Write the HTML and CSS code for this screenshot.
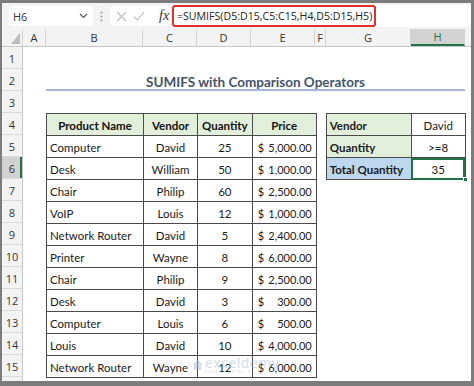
FILE: index.html
```html
<!DOCTYPE html>
<html lang="en">
<head>
    <meta charset="UTF-8">
    <meta name="viewport" content="width=device-width, initial-scale=1.0">
    <title>SUMIFS with Comparison Operators</title>
    <link rel="stylesheet" href="styles.css">
</head>
<body>
    <div class="app">
        <div class="formula-bar">
            <div class="name-box">
                <span>H6</span>
                <svg class="chevron" width="9" height="6" viewBox="0 0 9 6"><polyline points="1,1 4.5,4.5 8,1" fill="none" stroke="#555" stroke-width="1.1"/></svg>
            </div>
            <svg class="grip" width="3" height="11" viewBox="0 0 3 11"><circle cx="1.5" cy="1.5" r="1" fill="#9a9a9a"/><circle cx="1.5" cy="5.5" r="1" fill="#9a9a9a"/><circle cx="1.5" cy="9.5" r="1" fill="#9a9a9a"/></svg>
            <div class="fx-box">
                <svg width="11" height="11" viewBox="0 0 11 11"><path d="M1 1 L10 10 M10 1 L1 10" stroke="#bdbdbd" stroke-width="1.1"/></svg>
                <svg width="12" height="10" viewBox="0 0 12 10"><polyline points="1,5.5 4.3,9 11,1" fill="none" stroke="#bdbdbd" stroke-width="1.1"/></svg>
                <span class="fx">fx</span>
            </div>
            <div class="formula">
                <span class="formula-text">=SUMIFS(D5:D15,C5:C15,H4,D5:D15,H5)</span>
            </div>
        </div>

        <div class="col-headers">
            <div class="corner">
                <svg width="9" height="11" viewBox="0 0 9 11"><polygon points="9,0 9,11 0,11" fill="#bcbcbc"/></svg>
            </div>
            <div class="ch w-a">A</div>
            <div class="ch w-b">B</div>
            <div class="ch w-c">C</div>
            <div class="ch w-d">D</div>
            <div class="ch w-e">E</div>
            <div class="ch w-f">F</div>
            <div class="ch w-g">G</div>
            <div class="ch w-h active">H</div>
            <div class="ch w-i"></div>
        </div>

        <div class="sheet">
            <div class="row-headers">
                <div class="rh">1</div>
                <div class="rh">2</div>
                <div class="rh">3</div>
                <div class="rh">4</div>
                <div class="rh">5</div>
                <div class="rh active">6</div>
                <div class="rh">7</div>
                <div class="rh">8</div>
                <div class="rh">9</div>
                <div class="rh">10</div>
                <div class="rh">11</div>
                <div class="rh">12</div>
                <div class="rh">13</div>
                <div class="rh">14</div>
                <div class="rh">15</div>
                <div class="rh"></div>
            </div>

            <div class="cells">
                <div class="blank-row"></div>
                <div class="title-row">
                    <div class="title">SUMIFS with Comparison Operators</div>
                </div>
                <div class="blank-row"></div>

                <div class="tables">
                    <table class="data">
                        <tr class="head">
                            <th class="w-b">Product Name</th>
                            <th class="w-c">Vendor</th>
                            <th class="w-d">Quantity</th>
                            <th class="w-e">Price</th>
                        </tr>
                        <tr><td class="left">Computer</td><td>David</td><td>25</td><td class="price"><div class="money"><span>$</span><span>5,000.00</span></div></td></tr>
                        <tr><td class="left">Desk</td><td>William</td><td>50</td><td class="price"><div class="money"><span>$</span><span>1,000.00</span></div></td></tr>
                        <tr><td class="left">Chair</td><td>Philip</td><td>60</td><td class="price"><div class="money"><span>$</span><span>2,500.00</span></div></td></tr>
                        <tr><td class="left">VoIP</td><td>Louis</td><td>12</td><td class="price"><div class="money"><span>$</span><span>1,000.00</span></div></td></tr>
                        <tr><td class="left">Network Router</td><td>David</td><td>5</td><td class="price"><div class="money"><span>$</span><span>2,400.00</span></div></td></tr>
                        <tr><td class="left">Printer</td><td>Wayne</td><td>8</td><td class="price"><div class="money"><span>$</span><span>6,000.00</span></div></td></tr>
                        <tr><td class="left">Chair</td><td>Philip</td><td>9</td><td class="price"><div class="money"><span>$</span><span>2,500.00</span></div></td></tr>
                        <tr><td class="left">Desk</td><td>David</td><td>3</td><td class="price"><div class="money"><span>$</span><span>300.00</span></div></td></tr>
                        <tr><td class="left">Computer</td><td>Louis</td><td>6</td><td class="price"><div class="money"><span>$</span><span>500.00</span></div></td></tr>
                        <tr><td class="left">Louis</td><td>David</td><td>10</td><td class="price"><div class="money"><span>$</span><span>4,000.00</span></div></td></tr>
                        <tr><td class="left">Network Router</td><td>Wayne</td><td>12</td><td class="price"><div class="money"><span>$</span><span>6,000.00</span></div></td></tr>
                    </table>

                    <table class="criteria">
                        <tr><th class="w-g label">Vendor</th><td class="w-h">David</td></tr>
                        <tr><th class="label">Quantity</th><td>&gt;=8</td></tr>
                        <tr><th class="label total">Total Quantity</th><td class="selected">35<span class="handle"></span></td></tr>
                    </table>
                </div>
            </div>
        </div>

        <div class="watermark">
            <svg width="11" height="10" viewBox="0 0 12 11"><polygon points="6,0 12,5 10,5 10,11 2,11 2,5 0,5" fill="#a9bbd4"/></svg>
            <div class="wm-text">
                <span class="wm-name">exceldemy</span>
                <span class="wm-sub">EXCEL · DATA · BI</span>
            </div>
        </div>
    </div>
</body>
</html>
```

FILE: styles.css
```css
body {
    margin: 0;
    background-color: #7c7c7c;
    font-family: Lato, "Liberation Sans", sans-serif;
}

.app {
    position: relative;
    margin: 3px 3px 0 2px;
    height: 378px;
    background-color: #fff;
    overflow: hidden;
}

/* formula bar */
.formula-bar {
    display: flex;
    align-items: center;
    height: 26px;
    background-color: #f3f3f3;
}
.name-box {
    display: flex;
    align-items: center;
    justify-content: space-between;
    width: 84px;
    height: 20px;
    margin-left: 7px;
    padding: 0 5px 0 4px;
    box-sizing: border-box;
    background-color: #fff;
    border-radius: 3px;
    font-family: "Open Sans", sans-serif;
    font-size: 11px;
    color: #333;
}
.grip {
    margin: 0 7px 0 7px;
}
.fx-box {
    display: flex;
    align-items: center;
    gap: 6px;
    width: 61px;
    height: 20px;
    padding-left: 6px;
    box-sizing: border-box;
    background-color: #fff;
    border-radius: 3px 0 0 3px;
}
.fx {
    font-family: "Liberation Serif", serif;
    font-style: italic;
    font-size: 14px;
    color: #333;
    margin-left: 8px;
}
.formula {
    flex: 1;
    display: flex;
    align-items: center;
    height: 22px;
    margin-left: 1px;
    background-color: #fff;
}
.formula-text {
    border: 2px solid #e0312f;
    border-radius: 3px;
    padding: 2px 2px 2px 3px;
    font-family: "Open Sans", sans-serif;
    font-size: 10.6px;
    color: #222;
    line-height: 14px;
}

/* column headers */
.col-headers {
    display: flex;
    height: 18px;
    background-color: #f3f3f3;
    border-bottom: 1px solid #c9c9c9;
    box-sizing: border-box;
}
.corner {
    width: 21px;
    display: flex;
    align-items: flex-end;
    justify-content: flex-end;
    padding: 0 2px 2px 0;
    box-sizing: border-box;
    border-right: 1px solid #d4d4d4;
}
.ch {
    flex: none;
    display: flex;
    align-items: center;
    justify-content: center;
    box-sizing: border-box;
    border-right: 1px solid #d4d4d4;
    font-family: "Open Sans", sans-serif;
    font-size: 11px;
    color: #333;
}
.ch.active {
    background-color: #d2d2d2;
    border-bottom: 2px solid #217346;
    color: #217346;
}
.w-a { width: 23px; }
.w-b { width: 97px; }
.w-c { width: 54px; }
.w-d { width: 54px; }
.w-e { width: 64px; }
.w-f { width: 11px; }
.w-g { width: 85px; }
.w-h { width: 54px; }
.w-i { width: 6px; border-right: none; }

/* sheet */
.sheet {
    display: flex;
}
.row-headers {
    width: 21px;
    flex: none;
    background-color: #f3f3f3;
    border-right: 1px solid #c9c9c9;
    box-sizing: border-box;
}
.rh {
    height: 22px;
    box-sizing: border-box;
    border-bottom: 1px solid #dadada;
    display: flex;
    align-items: center;
    justify-content: center;
    padding-top: 2px;
    font-family: "Open Sans", sans-serif;
    font-size: 11px;
    color: #333;
}
.rh.active {
    background-color: #d2d2d2;
    box-shadow: inset -2px 0 0 #217346;
}

.cells {
    flex: 1;
}
.blank-row {
    height: 22px;
}
.title-row {
    height: 22px;
    padding-left: 23px;
}
.title {
    width: 419px;
    height: 22px;
    box-sizing: border-box;
    border-bottom: 2px solid #a2b6de;
    text-align: center;
    font-weight: bold;
    font-size: 13.5px;
    color: #44546a;
    padding-top: 5px;
}

.tables {
    display: flex;
    align-items: flex-start;
    padding-left: 23px;
}
table {
    border-collapse: collapse;
    table-layout: fixed;
    font-size: 11.5px;
    color: #1a1a1a;
}
tr {
    height: 22px;
}
th, td {
    border: 1px solid #4a4a4a;
    padding: 2px 4px 0;
    box-sizing: border-box;
    text-align: center;
    white-space: nowrap;
}
.head th {
    background-color: #e2efda;
    font-weight: bold;
    color: #111;
}
td.left {
    text-align: left;
    padding-left: 3px;
}
td.price {
    padding: 2px 4px 0 5px;
    font-size: 11px;
}
.money {
    display: flex;
    justify-content: space-between;
}

.criteria {
    margin-left: 9px;
}
.criteria th.label {
    background-color: #e2efda;
    text-align: left;
    padding-left: 3px;
    font-weight: bold;
}
.criteria th.total {
    background-color: #bdd7ee;
}
.criteria td.selected {
    position: relative;
    outline: 2px solid #217346;
    outline-offset: -2px;
}
.handle {
    position: absolute;
    right: -3px;
    bottom: -3px;
    width: 5px;
    height: 5px;
    background-color: #217346;
    border: 1px solid #fff;
    box-sizing: border-box;
}

/* faint site mark */
.watermark {
    position: absolute;
    left: 190px;
    top: 353px;
    display: flex;
    align-items: center;
    gap: 2px;
    opacity: 0.5;
}
.wm-text {
    display: flex;
    flex-direction: column;
    line-height: 1;
}
.wm-name {
    font-family: "Open Sans", sans-serif;
    font-size: 14px;
    color: #a9bbd4;
    letter-spacing: 0.5px;
}
.wm-sub {
    font-size: 4px;
    color: #a9bbd4;
    letter-spacing: 1px;
}
```
